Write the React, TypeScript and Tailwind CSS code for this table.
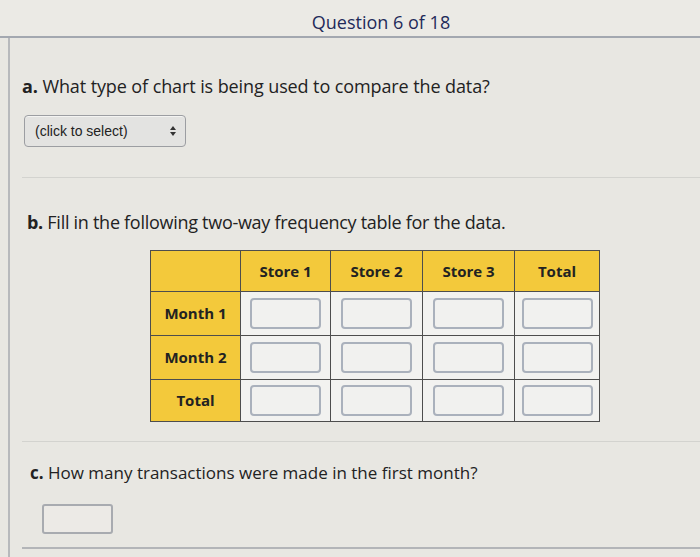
export default function App() {
  const cols = ["Store 1", "Store 2", "Store 3", "Total"];
  const rows = ["Month 1", "Month 2", "Total"];

  return (
    <div className="h-[557px] w-[700px] overflow-hidden bg-[#e8e7e2] font-['Open_Sans',sans-serif] text-[#222]">
      {/* header */}
      <div className="flex h-[38px] items-center justify-center border-b-2 border-[#a3a8b0] bg-[#ebeae5] pl-[62px] pt-[8px]">
        <span className="text-[18px] text-[#1f2a5a]">Question 6 of 18</span>
      </div>

      <div className="ml-[8px] h-[519px] border-l-2 border-[#b7b9bc] pl-[12px]">
        {/* a */}
        <div className="pt-[35px]">
          <p className="text-[18px] leading-[26px] tracking-[-0.1px]">
            <b>a.</b> What type of chart is being used to compare the data?
          </p>
          <div className="ml-[2px] mt-[16px] flex h-[32px] w-[162px] items-center justify-between rounded-[4px] border border-[#9c9ea2] bg-[#e3e3e1] pl-[10px] pr-[8px] font-['Liberation_Sans',sans-serif] text-[14px] text-[#222] shadow-[inset_0_1px_0_#f4f4f2]">
            <span>(click to select)</span>
            <svg width="8" height="12" viewBox="0 0 8 12">
              <path d="M4 1 L7 5 L1 5 Z" fill="#333" />
              <path d="M4 11 L7 7 L1 7 Z" fill="#333" />
            </svg>
          </div>
        </div>

        <div className="mt-[30px] h-px bg-[#d3d3cf]" />

        {/* b */}
        <p className="mt-[31px] pl-[5px] text-[18px] leading-[26px] tracking-[-0.28px]">
          <b>b.</b> Fill in the following two-way frequency table for the data.
        </p>

        <table className="ml-[128px] mt-[15px] border-collapse text-[15px] font-bold">
          <thead>
            <tr className="h-[41px]">
              <th className="w-[90px] border border-[#4d4d4d] bg-[#f3c93b]" />
              {cols.map((c, i) => (
                <th
                  key={c}
                  className={`border border-[#4d4d4d] bg-[#f3c93b] font-bold ${i === 3 ? "w-[85px]" : i === 0 ? "w-[90px]" : "w-[92px]"}`}
                >
                  {c}
                </th>
              ))}
            </tr>
          </thead>
          <tbody>
            {rows.map((r, ri) => (
              <tr key={r} className={ri === 2 ? "h-[42px]" : "h-[44px]"}>
                <td className="border border-[#4d4d4d] bg-[#f3c93b] text-center">{r}</td>
                {cols.map((c) => (
                  <td key={c} className="border border-[#4d4d4d] bg-[#f2f2f0] px-[6px]">
                    <div className="mx-auto h-[31px] w-[71px] rounded-[4px] border-2 border-[#aab1bc] bg-[#f1f1ef]" />
                  </td>
                ))}
              </tr>
            ))}
          </tbody>
        </table>

        <div className="mt-[19px] h-px bg-[#d3d3cf]" />

        {/* c */}
        <p className="mt-[19px] pl-[8px] text-[17px] leading-[24px]">
          <b>c.</b> How many transactions were made in the first month?
        </p>
        <div className="ml-[20px] mt-[19px] h-[30px] w-[71px] rounded-[3px] border-2 border-[#a8abb0] bg-[#eceae6]" />

        <div className="mt-[13px] h-[2px] bg-[#b3b5b8]" />
      </div>
    </div>
  );
}
